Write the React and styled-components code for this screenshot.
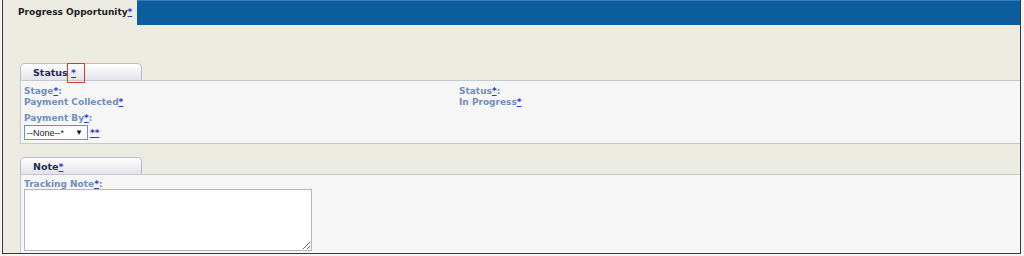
import React from "react";
import styled, { createGlobalStyle } from "styled-components";

const Global = createGlobalStyle`
  html, body { margin: 0; padding: 0; background: #f4f4f4; }
  body { font-family: "DejaVu Sans", Verdana, sans-serif; }
`;

const Frame = styled.div`
  width: 1017px;
  height: 253px;
  margin-left: 2px;
  border-left: 1px solid #3a3a3a;
  border-right: 1px solid #3a3a3a;
  border-bottom: 1px solid #3a3a3a;
  background: #ecebe1;
  display: flex;
  flex-direction: column;
  overflow: hidden;
`;

const TopBar = styled.div`
  display: flex;
  height: 25px;
  flex: none;
`;

const PageTab = styled.div`
  width: 134px;
  background: #ecebe1;
  font-size: 9px;
  font-weight: bold;
  color: #1c1c1c;
  padding: 7px 0 0 15px;
  box-sizing: border-box;
`;

const BlueFill = styled.div`
  flex: 1;
  background: #0b5e9b;
  border-top: 1px solid #3d7fb5;
`;

const Star = styled.a`
  color: #3535c8;
  text-decoration: underline;
  cursor: pointer;
`;

const Content = styled.div`
  padding: 38px 0 0 17px;
  display: flex;
  flex-direction: column;
  gap: 13px;
`;

const Section = styled.section`
  position: relative;
  display: flex;
  flex-direction: column;
`;

const SectionTab = styled.div`
  width: 122px;
  height: 17px;
  box-sizing: border-box;
  border: 1px solid #b9bdc8;
  border-bottom: none;
  border-radius: 5px 5px 0 0;
  background: linear-gradient(#ffffff, #e2e2ea);
  padding: 3px 0 0 12px;
  font-size: 9.5px;
  font-weight: bold;
  color: #1e2b5c;
`;

const Panel = styled.div`
  background: #f6f6f6;
  border-top: 1px solid #c4c8cf;
  border-left: 1px solid #c4c8cf;
  border-bottom: ${(p) => (p.$open ? "none" : "1px solid #c4c8cf")};
  padding: ${(p) => p.$pad};
  height: ${(p) => p.$h};
  box-sizing: border-box;
`;

const FieldGrid = styled.div`
  display: grid;
  grid-template-columns: 435px 1fr;
`;

const Column = styled.div`
  display: flex;
  flex-direction: column;
`;

const Label = styled.div`
  font-size: 9px;
  font-weight: bold;
  color: #6f8fbc;
  line-height: 11px;
  margin-top: ${(p) => p.$mt || "0"};
`;

const SelectRow = styled.div`
  display: flex;
  align-items: center;
  gap: 2px;
  margin-top: 1px;
`;

const FakeSelect = styled.div`
  width: 64px;
  height: 15px;
  box-sizing: border-box;
  border: 1px solid #6a8fd0;
  background: #fff;
  display: flex;
  align-items: center;
  justify-content: space-between;
  padding: 0 4px 0 2px;
  font-family: "Liberation Sans", Arial, sans-serif;
  font-size: 9px;
  color: #222;
`;

const Arrow = styled.span`
  font-size: 8px;
  color: #111;
`;

const StarsAfter = styled.span`
  font-size: 9px;
  font-weight: bold;
  color: #3535c8;
  text-decoration: underline;
`;

const NoteArea = styled.textarea`
  display: block;
  width: 288px;
  height: 62px;
  margin: -1px 0 0 0;
  box-sizing: border-box;
  border: 1px solid #b5b5b5;
  background: #fff;
  resize: both;
`;

const Highlight = styled.div`
  position: absolute;
  left: 47px;
  top: 0;
  width: 18px;
  height: 20px;
  box-sizing: border-box;
  border: 1px solid #d23a3a;
`;

export default function App() {
  return (
    <>
      <Global />
      <Frame>
        <TopBar>
          <PageTab>
            Progress Opportunity<Star>*</Star>
          </PageTab>
          <BlueFill />
        </TopBar>
        <Content>
          <Section>
            <SectionTab>
              Status <Star>*</Star>
            </SectionTab>
            <Highlight />
            <Panel $pad="5px 0 0 3px" $h="64px">
              <FieldGrid>
                <Column>
                  <Label>
                    Stage<Star>*</Star>:
                  </Label>
                  <Label>
                    Payment Collected<Star>*</Star>
                  </Label>
                  <Label $mt="5px">
                    Payment By<Star>*</Star>:
                  </Label>
                  <SelectRow>
                    <FakeSelect>
                      <span>--None--*</span>
                      <Arrow>▼</Arrow>
                    </FakeSelect>
                    <StarsAfter>**</StarsAfter>
                  </SelectRow>
                </Column>
                <Column>
                  <Label>
                    Status<Star>*</Star>:
                  </Label>
                  <Label>
                    In Progress<Star>*</Star>
                  </Label>
                </Column>
              </FieldGrid>
            </Panel>
          </Section>
          <Section>
            <SectionTab>
              Note<Star>*</Star>
            </SectionTab>
            <Panel $open $pad="4px 0 0 3px" $h="80px">
              <Label>
                Tracking Note<Star>*</Star>:
              </Label>
              <NoteArea />
            </Panel>
          </Section>
        </Content>
      </Frame>
    </>
  );
}
